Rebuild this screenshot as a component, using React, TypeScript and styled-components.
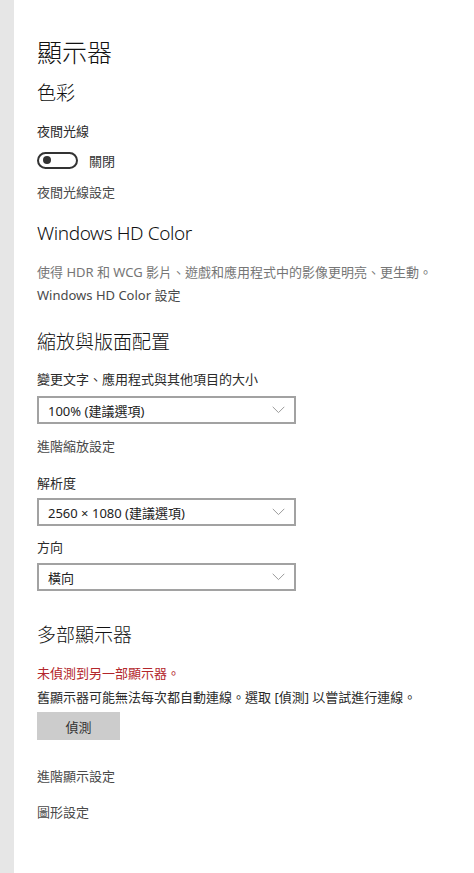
import React from "react";
import styled, { createGlobalStyle } from "styled-components";

const Global = createGlobalStyle`
  html, body { margin: 0; padding: 0; background: #fff; }
  body { font-family: "Noto Sans", "Noto Sans CJK TC", sans-serif; }
`;

const FONT = `"Noto Sans", "Noto Sans CJK TC", sans-serif`;

const Page = styled.div`
  display: flex;
  min-height: 873px;
  width: 474px;
  overflow: hidden;
`;

const Strip = styled.div`
  width: 14px;
  flex: none;
  background: #e6e6e6;
`;

const Content = styled.main`
  flex: 1;
  padding-left: 23px;
  display: flex;
  flex-direction: column;
  align-items: flex-start;
  font-family: ${FONT};
`;

const Title = styled.h1`
  margin: 36px 0 0;
  font-size: 25px;
  line-height: 32px;
  font-weight: 300;
  color: #111;
`;

const Section = styled.h2<{ $mt: number; $tight?: boolean }>`
  margin: ${(p) => p.$mt}px 0 0;
  font-size: 19px;
  line-height: 26px;
  font-weight: 300;
  color: #111;
  letter-spacing: ${(p) => (p.$tight ? "-0.4px" : "0")};
`;

const Text = styled.div<{ $mt: number; $tone?: "label" | "muted" | "link" | "error" }>`
  margin-top: ${(p) => p.$mt}px;
  font-size: 13px;
  line-height: 20px;
  white-space: nowrap;
  color: ${(p) =>
    p.$tone === "muted"
      ? "#767676"
      : p.$tone === "link"
      ? "#4a4a4a"
      : p.$tone === "error"
      ? "#b3262b"
      : "#2b2b2b"};
`;

const ToggleRow = styled.div`
  margin-top: 9px;
  height: 20px;
  display: flex;
  align-items: center;
  gap: 11px;
  font-size: 13px;
  color: #333;
`;

const Track = styled.div`
  box-sizing: border-box;
  width: 41px;
  height: 17px;
  border: 2px solid #333;
  border-radius: 9px;
  display: flex;
  align-items: center;
  padding-left: 4px;
`;

const Knob = styled.span`
  width: 8px;
  height: 8px;
  border-radius: 50%;
  background: #333;
`;

const Select = styled.div<{ $mt: number }>`
  box-sizing: border-box;
  margin-top: ${(p) => p.$mt}px;
  width: 259px;
  height: 28px;
  border: 2px solid #a2a2a2;
  display: flex;
  align-items: center;
  justify-content: space-between;
  padding: 0 9px 0 9px;
  font-size: 13px;
  color: #222;
`;

const Button = styled.div`
  margin-top: 5px;
  width: 83px;
  height: 28px;
  background: #cccccc;
  display: flex;
  align-items: center;
  justify-content: center;
  font-size: 13px;
  color: #333;
`;

const Chevron = () => (
  <svg width="13" height="8" viewBox="0 0 13 8" fill="none">
    <path d="M0.7 0.8 L6.5 6.6 L12.3 0.8" stroke="#9a9a9a" strokeWidth="1" />
  </svg>
);

export default function App() {
  return (
    <>
      <Global />
      <Page>
        <Strip />
        <Content>
          <Title>顯示器</Title>
          <Section $mt={12}>色彩</Section>
          <Text $mt={15}>夜間光線</Text>
          <ToggleRow>
            <Track>
              <Knob />
            </Track>
            <span>關閉</span>
          </ToggleRow>
          <Text $mt={12} $tone="link">夜間光線設定</Text>

          <Section $mt={18} $tight>Windows HD Color</Section>
          <Text $mt={16} $tone="muted">使得 HDR 和 WCG 影片、遊戲和應用程式中的影像更明亮、更生動。</Text>
          <Text $mt={3} $tone="link">Windows HD Color 設定</Text>

          <Section $mt={24}>縮放與版面配置</Section>
          <Text $mt={14}>變更文字、應用程式與其他項目的大小</Text>
          <Select $mt={7}>
            <span>100% (建議選項)</span>
            <Chevron />
          </Select>
          <Text $mt={12} $tone="link">進階縮放設定</Text>
          <Text $mt={17}>解析度</Text>
          <Select $mt={5}>
            <span>2560 × 1080 (建議選項)</span>
            <Chevron />
          </Select>
          <Text $mt={11}>方向</Text>
          <Select $mt={6}>
            <span>橫向</span>
            <Chevron />
          </Select>

          <Section $mt={31}>多部顯示器</Section>
          <Text $mt={15} $tone="error">未偵測到另一部顯示器。</Text>
          <Text $mt={4}>舊顯示器可能無法每次都自動連線。選取 [偵測] 以嘗試進行連線。</Text>
          <Button>偵測</Button>
          <Text $mt={26} $tone="link">進階顯示設定</Text>
          <Text $mt={16} $tone="link">圖形設定</Text>
        </Content>
      </Page>
    </>
  );
}
